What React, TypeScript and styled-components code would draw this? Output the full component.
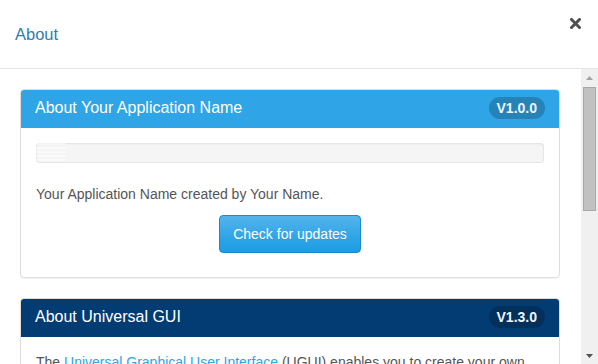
import React from "react";
import styled, { createGlobalStyle } from "styled-components";

const GlobalStyle = createGlobalStyle`
  html, body {
    margin: 0;
    padding: 0;
    background: #ffffff;
  }
  body {
    font-family: "Liberation Sans", Arial, sans-serif;
    font-size: 14px;
    color: #555555;
  }
`;

type PanelProps = {
  title: string;
  version: string;
  dark?: boolean;
  children: React.ReactNode;
};

const Panel = ({ title, version, dark, children }: PanelProps) => (
  <PanelBox>
    <PanelHeading $dark={dark}>
      <PanelTitle>{title}</PanelTitle>
      <Badge>{version}</Badge>
    </PanelHeading>
    <PanelBody>{children}</PanelBody>
  </PanelBox>
);

export default function App() {
  return (
    <>
      <GlobalStyle />
      <Modal>
        <Header>
          <Title>About</Title>
          <Close aria-label="Close">
            <svg width="11" height="11" viewBox="0 0 11 11">
              <path
                d="M1.5 1.5 L9.5 9.5 M9.5 1.5 L1.5 9.5"
                stroke="#505050"
                strokeWidth="3"
                strokeLinecap="square"
              />
            </svg>
          </Close>
        </Header>
        <BodyRow>
          <Content>
            <Panel title="About Your Application Name" version="V1.0.0">
              <Progress>
                <ProgressFill style={{ width: "6%" }} />
              </Progress>
              <Text $gap={11}>Your Application Name created by Your Name.</Text>
              <Center>
                <PrimaryButton>Check for updates</PrimaryButton>
              </Center>
            </Panel>
            <Panel title="About Universal GUI" version="V1.3.0" dark>
              <Text>
                The <Link href="#">Universal Graphical User Interface</Link>{" "}
                (UGUI) enables you to create your own cross-platform desktop
                applications using HTML, CSS, and JavaScript.
              </Text>
            </Panel>
          </Content>
          <Scrollbar>
            <ScrollArrow>
              <svg width="7" height="4" viewBox="0 0 7 4">
                <path d="M0 4 L3.5 0 L7 4 Z" fill="#a3a3a3" />
              </svg>
            </ScrollArrow>
            <Track>
              <Thumb />
            </Track>
            <ScrollArrow>
              <svg width="7" height="4" viewBox="0 0 7 4">
                <path d="M0 0 L7 0 L3.5 4 Z" fill="#505050" />
              </svg>
            </ScrollArrow>
          </Scrollbar>
        </BodyRow>
      </Modal>
    </>
  );
}

const Modal = styled.div`
  width: 598px;
  height: 364px;
  display: flex;
  flex-direction: column;
  overflow: hidden;
  background: #ffffff;
`;

const Header = styled.div`
  height: 68px;
  flex-shrink: 0;
  display: flex;
  align-items: center;
  justify-content: space-between;
  padding: 0 17px 0 15px;
  border-bottom: 1px solid #e5e5e5;
`;

const Title = styled.h4`
  margin: 1px 0 0;
  font-size: 16.5px;
  font-weight: normal;
  color: #317eac;
`;

const Close = styled.button`
  border: 0;
  background: none;
  padding: 0;
  margin-bottom: 22px;
  display: flex;
  cursor: pointer;
`;

const BodyRow = styled.div`
  flex: 1;
  display: flex;
  min-height: 0;
`;

const Content = styled.div`
  flex: 1;
  padding: 20px 21px 0 20px;
  overflow: hidden;
`;

const PanelBox = styled.div`
  border: 1px solid #dddddd;
  border-radius: 4px;
  margin-bottom: 20px;
  box-shadow: 0 1px 1px rgba(0, 0, 0, 0.05);
  overflow: hidden;
`;

const PanelHeading = styled.div<{ $dark?: boolean }>`
  display: flex;
  align-items: center;
  justify-content: space-between;
  height: 38px;
  padding: 0 15px;
  margin: -1px -1px 0;
  background: ${(p) => (p.$dark ? "#033c73" : "#2fa4e7")};
  border-bottom: 1px solid ${(p) => (p.$dark ? "#033c73" : "#2fa4e7")};
  border-radius: 4px 4px 0 0;
  color: #ffffff;
`;

const PanelTitle = styled.h3`
  margin: 0;
  font-size: 16px;
  font-weight: normal;
`;

const Badge = styled.span`
  display: inline-block;
  height: 22px;
  line-height: 22px;
  padding: 0 8px;
  border-radius: 11px;
  background: rgba(0, 0, 0, 0.2);
  font-size: 14px;
  font-weight: bold;
  color: #f0f6fb;
`;

const PanelBody = styled.div`
  padding: 15px;
`;

const Progress = styled.div`
  height: 20px;
  margin-bottom: 21px;
  border-radius: 4px;
  background: #f5f5f5;
  box-shadow: inset 0 0 0 1px #e6e6e6, inset 0 1px 2px rgba(0, 0, 0, 0.08);
  overflow: hidden;
`;

const ProgressFill = styled.div`
  height: 100%;
  background: repeating-linear-gradient(
    180deg,
    rgba(255, 255, 255, 0.5) 0 2px,
    transparent 2px 4px
  );
`;

const Text = styled.p<{ $gap?: number }>`
  margin: 0 0 ${(p) => p.$gap ?? 10}px;
  line-height: 20px;
`;

const Link = styled.a`
  color: #2fa4e7;
  text-decoration: none;
`;

const Center = styled.div`
  display: flex;
  justify-content: center;
  padding-bottom: 9px;
`;

const PrimaryButton = styled.button`
  font-family: "Liberation Sans", Arial, sans-serif;
  font-size: 14px;
  line-height: 20px;
  padding: 8px 13px;
  color: #ffffff;
  border: 1px solid #178acc;
  border-radius: 4px;
  background: linear-gradient(#54b4eb, #2fa4e7 60%, #1d9ce5);
  text-shadow: 0 1px 0 rgba(0, 0, 0, 0.05);
  cursor: pointer;
`;

const Scrollbar = styled.div`
  width: 17px;
  flex-shrink: 0;
  display: flex;
  flex-direction: column;
  background: #f0f0f0;
`;

const ScrollArrow = styled.div`
  height: 17px;
  display: flex;
  align-items: center;
  justify-content: center;
`;

const Track = styled.div`
  flex: 1;
  padding: 1px 2px;
`;

const Thumb = styled.div`
  height: 124px;
  background: #c1c1c1;
  border: 1px solid #a8a8a8;
  box-sizing: border-box;
`;
